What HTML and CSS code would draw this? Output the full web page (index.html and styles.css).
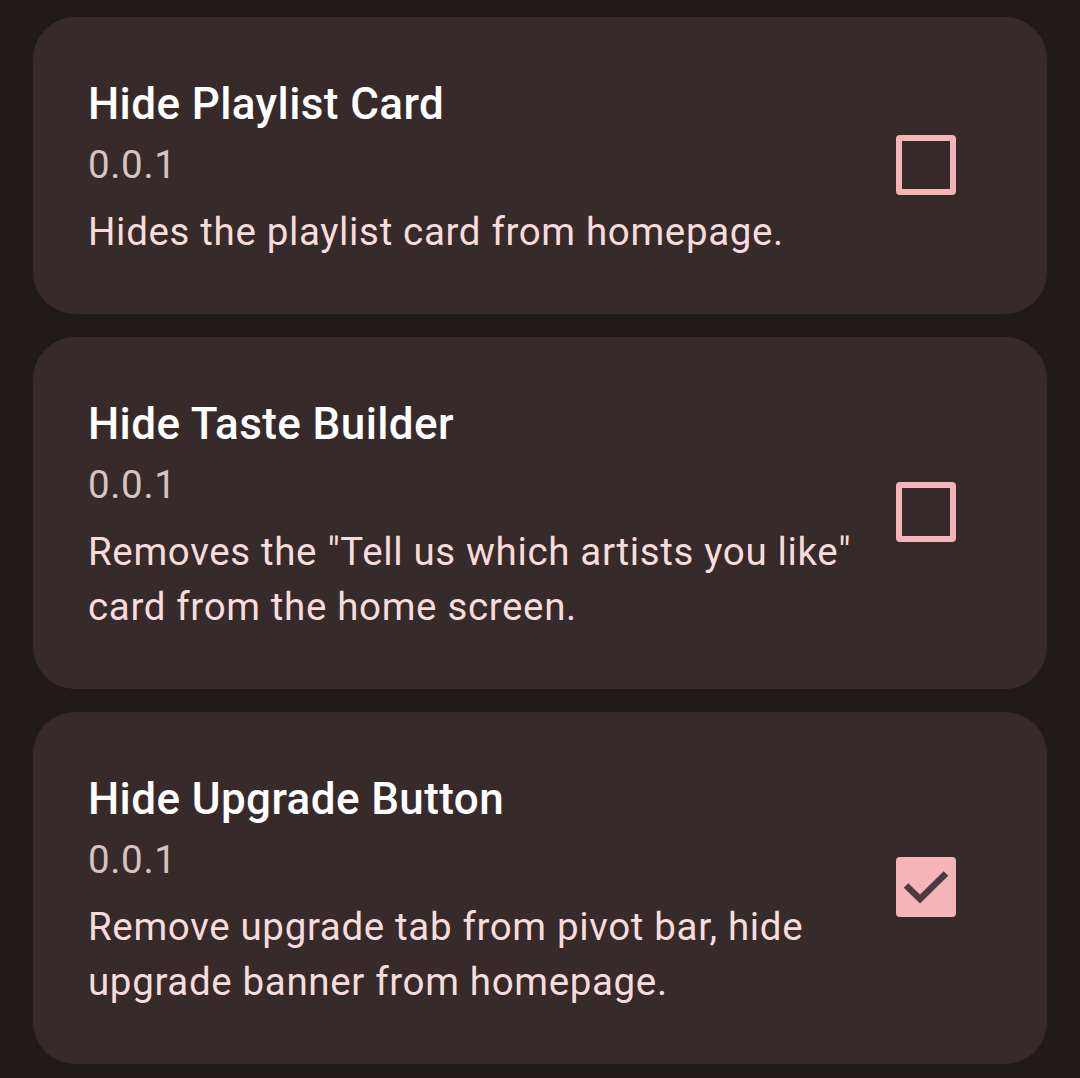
FILE: index.html
```html
<!DOCTYPE html>
<html lang="en">
<head>
<meta charset="utf-8">
<title>Patches</title>
<link rel="stylesheet" href="styles.css">
</head>
<body>
<main class="list">
  <section class="card">
    <div class="info">
      <h2 class="title">Hide Playlist Card</h2>
      <div class="version">0.0.1</div>
      <p class="desc">Hides the playlist card from homepage.</p>
    </div>
    <span class="check"></span>
  </section>
  <section class="card">
    <div class="info">
      <h2 class="title">Hide Taste Builder</h2>
      <div class="version">0.0.1</div>
      <p class="desc">Removes the "Tell us which artists you like" card from the home screen.</p>
    </div>
    <span class="check"></span>
  </section>
  <section class="card">
    <div class="info">
      <h2 class="title">Hide Upgrade Button</h2>
      <div class="version">0.0.1</div>
      <p class="desc">Remove upgrade tab from pivot bar, hide upgrade banner from homepage.</p>
    </div>
    <span class="check checked">
      <svg viewBox="0 0 60 60" width="60" height="60" aria-hidden="true"><polyline points="10,28.5 24,42 50,16.5" fill="none" stroke="#4c3a3c" stroke-width="6.5" stroke-linejoin="miter" stroke-linecap="butt"/></svg>
    </span>
  </section>
</main>
</body>
</html>
```

FILE: styles.css
```css
html, body {
  margin: 0;
  padding: 0;
  background: #201a1a;
}

body {
  font-family: Roboto, "Liberation Sans", sans-serif;
  -webkit-font-smoothing: antialiased;
}

.list {
  display: flex;
  flex-direction: column;
  gap: 23px;
  padding: 17px 33px;
}

.card {
  display: flex;
  align-items: center;
  background: #372a2b;
  border-radius: 42px;
  padding: 57px 91px 55px 55px;
}

.info {
  flex: 1;
  min-width: 0;
  padding-right: 30px;
}

.title {
  margin: 0;
  font-size: 44px;
  line-height: 60px;
  font-weight: 500;
  letter-spacing: 0.4px;
  color: #ffffff;
}

.version {
  margin-top: 3px;
  font-size: 38.5px;
  line-height: 55px;
  letter-spacing: 0.65px;
  color: #d8c2c2;
}

.desc {
  margin: 12px 0 0;
  font-size: 38.5px;
  line-height: 55px;
  letter-spacing: 0.65px;
  color: #f8dcdc;
}

.check {
  flex: none;
  box-sizing: border-box;
  width: 60px;
  height: 60px;
  margin-bottom: 4px;
  border: 6.5px solid #f4b5b8;
  border-radius: 4px;
  display: flex;
  align-items: center;
  justify-content: center;
}

.check.checked {
  background: #f4b5b8;
  border: none;
}
```
